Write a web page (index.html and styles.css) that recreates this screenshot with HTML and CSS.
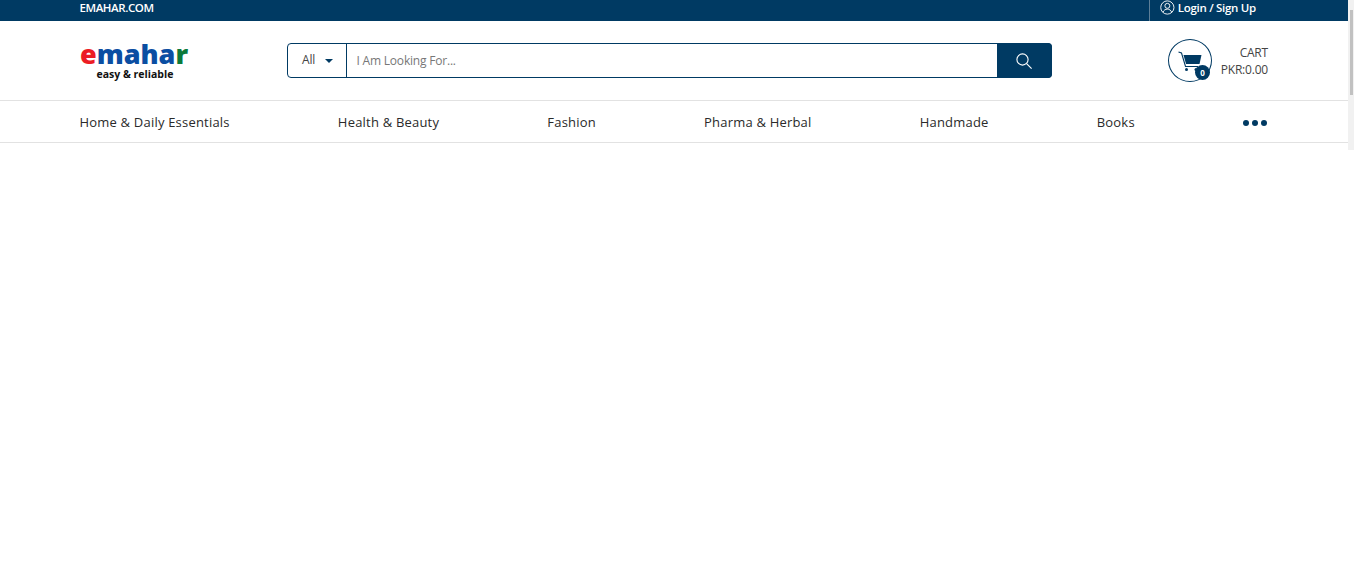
FILE: index.html
```html
<!DOCTYPE html>
<html lang="en">
<head>
<meta charset="utf-8">
<title>emahar</title>
<link rel="stylesheet" href="styles.css">
</head>
<body>
<div class="page">
  <div class="topbar">
    <span class="site">EMAHAR.COM</span>
    <a class="login">
      <svg class="user" viewBox="0 0 16 16" width="15" height="15" fill="none" stroke="#fff" stroke-width="1">
        <circle cx="8" cy="8" r="7.2"/><circle cx="8" cy="6.2" r="2.7"/><path d="M3.2 13.2c.9-2.300 2.700-3.400 4.800-3.400s3.900 1.100 4.800 3.400"/>
      </svg>
      <span class="login-text">Login / Sign Up</span>
    </a>
  </div>
  <header class="header">
    <div class="logo">
      <div class="logo-word"><span class="l-e">e</span><span class="l-b">maha</span><span class="l-g">r</span></div>
      <div class="logo-tag">easy &amp; reliable</div>
    </div>
    <form class="search">
      <div class="cat">All<span class="caret"></span></div>
      <div class="field">I Am Looking For...</div>
      <div class="go">
        <svg viewBox="0 0 16 16" width="16" height="16" fill="none" stroke="#fff" stroke-width="1.100"><circle cx="6.500" cy="6.500" r="5.600"/><path d="M10.600 10.600 15.600 15.600"/></svg>
      </div>
    </form>
    <div class="cart">
      <div class="cart-icon">
        <svg class="cart-svg" viewBox="0 0 24 21" width="24" height="21">
          <path d="M.5 1 3.500 2 7.500 15.500H20" fill="none" stroke="#003a63" stroke-width="1.100"/>
          <path d="M5.500 4H23.500L21.500 13H8Z" fill="#003a63"/>
          <circle cx="8.500" cy="18.500" r="1.500" fill="#003a63"/>
          <circle cx="18" cy="18.500" r="1.500" fill="#003a63"/>
        </svg>
        <span class="badge">0</span>
      </div>
      <div class="cart-text"><div>CART</div><div>PKR:0.00</div></div>
    </div>
  </header>
  <nav class="nav">
    <a>Home &amp; Daily Essentials</a>
    <a>Health &amp; Beauty</a>
    <a>Fashion</a>
    <a>Pharma &amp; Herbal</a>
    <a>Handmade</a>
    <a>Books</a>
    <span class="dots"><i></i><i></i><i></i></span>
  </nav>
  <div class="scroll"><div class="thumb"></div></div>
</div>
</body>
</html>
```
FILE: styles.css
```css
* { box-sizing: border-box; }
html, body { margin: 0; padding: 0; background: #fff; overflow: hidden; }
body { font-family: "Open Sans", sans-serif; color: #333; }
.page { position: relative; width: 1360px; height: 567px; padding-right: 12px; }
.topbar {
  height: 21px; background: #003a63; color: #fff;
  display: flex; justify-content: space-between; align-items: flex-start;
  padding: 0 92px 0 80px; font-size: 11.500px; font-weight: 600; line-height: 16px;
}
.site { letter-spacing: -0.42px; margin-left: -0.5px; }
.login {
  height: 21px; width: 107px; border-left: 1px solid #5d7f98;
  display: flex; align-items: flex-start; gap: 3px; padding: 0 0 0 10px;
  letter-spacing: -0.28px; white-space: nowrap;
}
.login-text { white-space: nowrap; }
.header {
  height: 80px; display: flex; align-items: center;
  padding: 0 80px; border-bottom: 1px solid #e2e2e2;
}
.logo { width: 207px; height: 38px; flex: none; margin-top: 1px; }
.logo-word {
  font-weight: 800; font-size: 27px;
  line-height: 24px; height: 24px; white-space: nowrap;
}
.l-e { color: #ec1c24; }
.l-b { color: #0b4ea2; }
.l-g { color: #0b7a3b; }
.logo-tag {
  font-size: 10.500px; font-weight: 700; color: #111; line-height: 12px;
  padding-left: 16.500px; white-space: nowrap; margin-top: 2px;
}
.search {
  width: 765px; height: 35px; flex: none; display: flex;
  border: 1px solid #003a63; border-radius: 4px; font-size: 12px;
}
.cat {
  width: 59px; flex: none; border-right: 1px solid #003a63;
  display: flex; align-items: center; padding-left: 14px; gap: 10px;
  color: #444; letter-spacing: -0.2px; padding-bottom: 2px;
}
.caret {
  width: 0; height: 0; border-left: 4px solid transparent;
  border-right: 4px solid transparent; border-top: 4px solid #003a63; margin-top: 2px;
}
.field {
  flex: 1; display: flex; align-items: center; padding-left: 9.500px;
  color: #777; letter-spacing: -0.2px;
}
.go {
  width: 55px; flex: none; background: #003a63; margin: -1px -1px -1px 0;
  border-radius: 0 4px 4px 0; display: flex; align-items: center; justify-content: center;
  padding-right: 2px;
}
.cart { margin-left: auto; display: flex; justify-content: space-between; width: 100px; align-items: center; }
.cart-icon {
  position: relative; width: 44px; height: 43px; border: 1px solid #003a63; border-radius: 50%;
  display: flex; align-items: flex-start; justify-content: flex-start; padding: 11px 0 0 9px;
}
.cart-svg { display: block; }
.badge {
  position: absolute; left: 26px; top: 25px; width: 15px; height: 15px; border-radius: 50%;
  background: #003a63; color: #fff; font-size: 8px; font-weight: 700; line-height: 15px; text-align: center;
}
.cart-text { font-size: 12px; line-height: 17px; text-align: right; color: #444; letter-spacing: -0.2px; margin-top: 1px; }
.nav {
  height: 42px; display: flex; justify-content: space-between; align-items: center;
  padding: 0 80px 0 79.500px; border-bottom: 1px solid #e2e2e2;
  font-size: 13px; font-weight: 500; color: #2a2a2a; letter-spacing: 0.2px;
}
.dots { display: flex; gap: 3px; width: 25px; margin-top: 2px; }
.dots i { width: 6px; height: 6px; border-radius: 50%; background: #003a63; display: block; }
.scroll { position: absolute; left: 1348px; top: 0; width: 6px; height: 150px; background: #f1f1f1; }
.thumb { position: absolute; left: 2px; top: 10px; width: 3px; height: 85px; background: #c1c1c1; }
```
